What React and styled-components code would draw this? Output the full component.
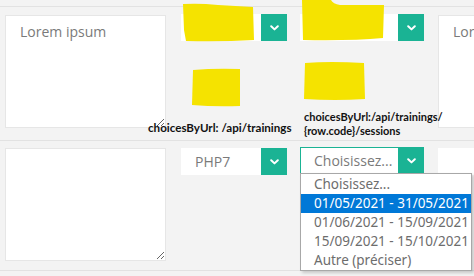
import React from "react";
import styled, { createGlobalStyle } from "styled-components";

const Global = createGlobalStyle`
  html, body { margin: 0; padding: 0; background: #f3f3f3; overflow: hidden; }
  body { font-family: "Open Sans", "Noto Sans", sans-serif; }
  * { box-sizing: border-box; }
`;

const Page = styled.div`
  position: relative;
  width: 474px;
  height: 276px;
  padding-top: 6px;
  overflow: hidden;
`;

const Row = styled.div`
  display: grid;
  grid-template-columns: 176px 119px 138px 1fr;
  align-items: start;
  border-top: 1px solid #e2e2e2;
  border-bottom: ${(p) => (p.$last ? "1px solid #e2e2e2" : "none")};
  height: ${(p) => p.$h}px;
  padding-top: ${(p) => p.$pt}px;
  padding-left: 5px;
`;

const Cell = styled.div`
  position: relative;
  padding-top: ${(p) => p.$offset || 0}px;
`;

const Comment = styled.textarea`
  display: block;
  width: 161px;
  height: 113px;
  margin: 0;
  padding: 6px 14px;
  border: 1px solid #e6e6e6;
  background: #fff;
  font-family: "Open Sans", "Noto Sans", sans-serif;
  font-size: 14px;
  color: #555;
  resize: vertical;
  outline: none;
  &::placeholder { color: #7a7a7a; }
`;

const SelectBox = styled.div`
  position: relative;
  display: flex;
  align-items: stretch;
  width: ${(p) => p.$w}px;
  height: 27px;
  background: #fff;
  border: 1px solid ${(p) => (p.$focused ? "#1ab394" : "#fff")};
`;

const SelectValue = styled.div`
  flex: 1;
  display: flex;
  align-items: center;
  padding-left: 13px;
  font-size: 14px;
  color: #7a7a7a;
  white-space: nowrap;
`;

const ArrowButton = styled.div`
  width: 26px;
  display: flex;
  align-items: center;
  justify-content: center;
  background: #1ab394;
  margin: -1px -1px -1px 0;
`;

const Chevron = () => (
  <svg width="9" height="6" viewBox="0 0 9 6">
    <path d="M1.2 1.2 L4.5 4.4 L7.8 1.2" fill="none" stroke="#fff" strokeWidth="2" strokeLinecap="round" strokeLinejoin="round" />
  </svg>
);

const DropList = styled.ul`
  position: absolute;
  z-index: 5;
  top: 100%;
  left: -1px;
  width: 172px;
  margin: 0;
  padding: 1px 0 0;
  list-style: none;
  background: #fff;
  border: 1px solid #a8a8a8;
  box-shadow: 2px 2px 3px rgba(0, 0, 0, 0.18);
  font-family: "Noto Sans", "Open Sans", sans-serif;
  font-size: 13.5px;
`;

const DropItem = styled.li`
  height: 19px;
  line-height: 19px;
  padding-left: 13px;
  white-space: nowrap;
  color: ${(p) => (p.$active ? "#fff" : "#6d6d6d")};
  background: ${(p) => (p.$active ? "#0078d7" : "transparent")};
`;

const Note = styled.div`
  position: absolute;
  z-index: 3;
  left: ${(p) => p.$x}px;
  top: ${(p) => p.$y}px;
  font-family: Lato, "Liberation Sans", sans-serif;
  font-weight: 700;
  font-size: ${(p) => p.$size}px;
  line-height: 14px;
  color: #111;
  white-space: nowrap;
`;

const Redactions = styled.svg`
  position: absolute;
  z-index: 4;
  left: 0;
  top: 0;
  pointer-events: none;
`;

const Select = ({ w, value, focused, children }) => (
  <SelectBox $w={w} $focused={focused}>
    <SelectValue>{value}</SelectValue>
    <ArrowButton>
      <Chevron />
    </ArrowButton>
    {children}
  </SelectBox>
);

const options = [
  "Choisissez...",
  "01/05/2021 - 31/05/2021",
  "01/06/2021 - 15/09/2021",
  "15/09/2021 - 15/10/2021",
  "Autre (préciser)",
];

export default function App() {
  return (
    <>
      <Global />
      <Page>
        <Row $h={134} $pt={7}>
          <Cell $offset={1}>
            <Comment placeholder="Lorem ipsum" />
          </Cell>
          <Cell>
            <Select w={106} value="" />
          </Cell>
          <Cell>
            <Select w={124} value="" />
          </Cell>
          <Cell $offset={1}>
            <Comment placeholder="Lorem ipsum" />
          </Cell>
        </Row>
        <Row $h={131} $pt={6} $last>
          <Cell $offset={1}>
            <Comment placeholder="" />
          </Cell>
          <Cell $offset={1}>
            <Select w={106} value="PHP7" />
          </Cell>
          <Cell>
            <Select w={124} value="Choisissez..." focused>
              <DropList>
                {options.map((o, i) => (
                  <DropItem key={o} $active={i === 1}>
                    {o}
                  </DropItem>
                ))}
              </DropList>
            </Select>
          </Cell>
          <Cell $offset={1}>
            <SelectBox $w={161} />
          </Cell>
        </Row>
        <Note $x={148} $y={121} $size={11.6}>choicesByUrl: /api/trainings</Note>
        <Note $x={304} $y={110} $size={11}>
          choicesByUrl:/api/trainings/
          <br />
          {"{row.code}/sessions"}
        </Note>
        <Redactions width="474" height="276" viewBox="0 0 474 276">
          <path d="M183 4 Q200 3 218 5 L253 7 L254 40 Q220 42 186 41 L184 30 Z" fill="#f5e300" />
          <path d="M193 70 Q215 68 240 69 L240 106 Q215 107 192 105 Z" fill="#f5e300" />
          <path d="M302 0 L331 0 Q333 4 340 5 L384 5 L383 38 Q350 41 303 40 Z" fill="#f5e300" />
          <path d="M305 63 Q330 61 364 63 L365 99 Q335 101 304 99 Z" fill="#f5e300" />
        </Redactions>
      </Page>
    </>
  );
}
